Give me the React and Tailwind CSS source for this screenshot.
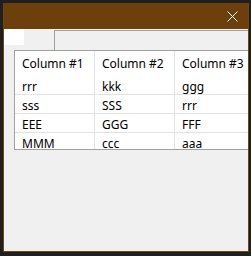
import React from "react";

const rows = [
  ["rrr", "kkk", "ggg"],
  ["sss", "SSS", "rrr"],
  ["EEE", "GGG", "FFF"],
  ["MMM", "ccc", "aaa"],
];

function Cell({ children, last, extra = "" }) {
  return (
    <div
      className={
        "shrink-0 pl-[7px] " +
        extra +
        " " +
        (last ? "w-[90px]" : "w-[80px] border-r border-[#e3e3e3]")
      }
    >
      {children}
    </div>
  );
}

export default function App() {
  return (
    <div
      className="w-[251px] h-[256px] bg-[#1f1f1f] pl-[3px] pt-[3px] overflow-hidden"
      style={{ fontFamily: '"Noto Sans", "Open Sans", sans-serif' }}
    >
      <div className="w-[246px] h-[249px] border border-t-0 border-[#6e4511] bg-[#f0f0f0] flex flex-col overflow-hidden">
        <div className="h-[26px] shrink-0 bg-[#6c3f0c] flex items-center justify-end pr-[10px]">
          <svg width="11" height="11" viewBox="0 0 11 11">
            <path d="M0.5 0.5 L10.5 10.5 M10.5 0.5 L0.5 10.5" stroke="#ffffff" strokeWidth="1" />
          </svg>
        </div>
        <div className="flex h-[21px] shrink-0">
          <div className="w-[20px] h-[16px] bg-white shrink-0" />
          <div className="ml-[30px] mt-[1px] flex-1 border-l border-t border-[#a0a0a0] bg-[#f0f0f0]" />
        </div>
        <div className="ml-[10px] w-[260px] h-[100px] border border-r-0 border-[#a0a0a0] bg-white text-[12px] text-black overflow-hidden">
          <div className="flex h-[25px]">
            <Cell extra="pt-[5px] leading-[16px]">Column #1</Cell>
            <Cell extra="pt-[5px] leading-[16px]">Column #2</Cell>
            <Cell last extra="pt-[5px] leading-[16px]">Column #3</Cell>
          </div>
          {rows.map((r, i) => (
            <div key={i} className="flex h-[19px] border-b border-[#e3e3e3]">
              <Cell extra="pt-[4px] leading-[14px]">{r[0]}</Cell>
              <Cell extra="pt-[4px] leading-[14px]">{r[1]}</Cell>
              <Cell last extra="pt-[4px] leading-[14px]">{r[2]}</Cell>
            </div>
          ))}
        </div>
      </div>
    </div>
  );
}
